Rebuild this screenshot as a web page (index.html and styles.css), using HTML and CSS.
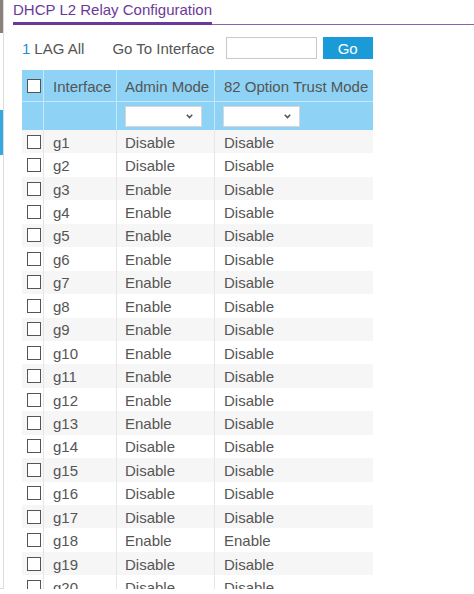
FILE: index.html
```html
<!DOCTYPE html>
<html>
<head>
<meta charset="utf-8">
<link rel="stylesheet" href="styles.css">
</head>
<body>
<div class="frame">
  <div class="side">
    <div class="side-top"></div>
    <div class="side-active"></div>
  </div>
  <div class="content">
    <div class="page-head"><span class="page-title">DHCP L2 Relay Configuration</span></div>
    <div class="toolbar">
      <span class="count">1</span>
      <span class="lag">LAG All</span>
      <span class="goto">Go To Interface</span>
      <input class="goto-input" type="text">
      <button class="go-btn">Go</button>
    </div>
    <div class="grid">
      <div class="row head">
        <div class="cell cb"><span class="box"></span></div>
        <div class="cell">Interface</div>
        <div class="cell">Admin Mode</div>
        <div class="cell">82 Option Trust Mode</div>
      </div>
      <div class="row filter">
        <div class="cell cb"></div>
        <div class="cell"></div>
        <div class="cell"><div class="sel"><svg width="7" height="5" viewBox="0 0 7 5"><polyline points="0.8,0.8 3.5,3.6 6.2,0.8" fill="none" stroke="#555" stroke-width="1.6"/></svg></div></div>
        <div class="cell"><div class="sel"><svg width="7" height="5" viewBox="0 0 7 5"><polyline points="0.8,0.8 3.5,3.6 6.2,0.8" fill="none" stroke="#555" stroke-width="1.6"/></svg></div></div>
      </div>
      <div class="row data"><div class="cell cb"><span class="box"></span></div><div class="cell">g1</div><div class="cell">Disable</div><div class="cell">Disable</div></div>
      <div class="row data"><div class="cell cb"><span class="box"></span></div><div class="cell">g2</div><div class="cell">Disable</div><div class="cell">Disable</div></div>
      <div class="row data"><div class="cell cb"><span class="box"></span></div><div class="cell">g3</div><div class="cell">Enable</div><div class="cell">Disable</div></div>
      <div class="row data"><div class="cell cb"><span class="box"></span></div><div class="cell">g4</div><div class="cell">Enable</div><div class="cell">Disable</div></div>
      <div class="row data"><div class="cell cb"><span class="box"></span></div><div class="cell">g5</div><div class="cell">Enable</div><div class="cell">Disable</div></div>
      <div class="row data"><div class="cell cb"><span class="box"></span></div><div class="cell">g6</div><div class="cell">Enable</div><div class="cell">Disable</div></div>
      <div class="row data"><div class="cell cb"><span class="box"></span></div><div class="cell">g7</div><div class="cell">Enable</div><div class="cell">Disable</div></div>
      <div class="row data"><div class="cell cb"><span class="box"></span></div><div class="cell">g8</div><div class="cell">Enable</div><div class="cell">Disable</div></div>
      <div class="row data"><div class="cell cb"><span class="box"></span></div><div class="cell">g9</div><div class="cell">Enable</div><div class="cell">Disable</div></div>
      <div class="row data"><div class="cell cb"><span class="box"></span></div><div class="cell">g10</div><div class="cell">Enable</div><div class="cell">Disable</div></div>
      <div class="row data"><div class="cell cb"><span class="box"></span></div><div class="cell">g11</div><div class="cell">Enable</div><div class="cell">Disable</div></div>
      <div class="row data"><div class="cell cb"><span class="box"></span></div><div class="cell">g12</div><div class="cell">Enable</div><div class="cell">Disable</div></div>
      <div class="row data"><div class="cell cb"><span class="box"></span></div><div class="cell">g13</div><div class="cell">Enable</div><div class="cell">Disable</div></div>
      <div class="row data"><div class="cell cb"><span class="box"></span></div><div class="cell">g14</div><div class="cell">Disable</div><div class="cell">Disable</div></div>
      <div class="row data"><div class="cell cb"><span class="box"></span></div><div class="cell">g15</div><div class="cell">Disable</div><div class="cell">Disable</div></div>
      <div class="row data"><div class="cell cb"><span class="box"></span></div><div class="cell">g16</div><div class="cell">Disable</div><div class="cell">Disable</div></div>
      <div class="row data"><div class="cell cb"><span class="box"></span></div><div class="cell">g17</div><div class="cell">Disable</div><div class="cell">Disable</div></div>
      <div class="row data"><div class="cell cb"><span class="box"></span></div><div class="cell">g18</div><div class="cell">Enable</div><div class="cell">Enable</div></div>
      <div class="row data"><div class="cell cb"><span class="box"></span></div><div class="cell">g19</div><div class="cell">Disable</div><div class="cell">Disable</div></div>
      <div class="row data"><div class="cell cb"><span class="box"></span></div><div class="cell">g20</div><div class="cell">Disable</div><div class="cell">Disable</div></div>
    </div>
  </div>
</div>
</body>
</html>
```
FILE: styles.css
```css
* { box-sizing: border-box; }
html, body { margin: 0; padding: 0; background: #fff; }
body {
  font-family: "Liberation Sans", Arial, sans-serif;
  font-size: 15px;
  color: #555;
}
.frame {
  display: flex;
  height: 589px;
  overflow: hidden;
}
.side {
  width: 4px;
  flex: none;
  border-right: 1px solid #dcdcdc;
  border-bottom: 1px solid #dcdcdc;
  display: flex;
  flex-direction: column;
}
.side-top { height: 33px; background: #8b817a; }
.side-active { margin-top: 77px; height: 45px; background: #35a9df; }
.content {
  flex: 1;
  padding-left: 9px;
  overflow: hidden;
}
.page-head {
  height: 25px;
  border-bottom: 1px solid #8a62b0;
}
.page-title {
  display: inline-block;
  height: 25px;
  line-height: 20px;
  padding-bottom: 2px;
  border-bottom: 3px solid #6b3a98;
  color: #6b3a98;
  font-size: 15px;
}
.toolbar {
  display: flex;
  align-items: center;
  height: 22px;
  margin-top: 12px;
  padding-left: 9px;
}
.count { color: #1b92cf; margin-right: 4px; }
.lag { margin-right: 28px; }
.goto { margin-right: 11px; }
.goto-input {
  width: 91px;
  height: 22px;
  border: 1px solid #c9c9c9;
  margin: 0 6px 0 0;
  padding: 0;
  background: #fff;
}
.go-btn {
  width: 50px;
  height: 22px;
  border: none;
  margin: 0;
  padding: 0;
  background: #1a9bd7;
  color: #fff;
  font-family: "Liberation Sans", Arial, sans-serif;
  font-size: 15px;
}
.grid {
  margin-top: 11px;
  margin-left: 9px;
  width: 351px;
}
.row {
  display: grid;
  grid-template-columns: 22px 73px 98px 158px;
  height: 23.44px;
}
.cell {
  display: flex;
  align-items: center;
  padding-left: 9px;
  padding-top: 1px;
  white-space: nowrap;
  border-right: 1px solid #e6e6e6;
}
.cell:nth-child(3) { padding-left: 8px; }
.cell:last-child { border-right: none; }
.cell.cb { padding-left: 5px; padding-top: 0; }
.box {
  display: inline-block;
  width: 14px;
  height: 14px;
  border: 1.5px solid #555;
  background: #fff;
}
.row.head {
  height: 32px;
  background: #8ed3f5;
  border-bottom: 1px solid #c4e8fa;
}
.row.head .cell, .row.filter .cell { border-right-color: #c4e8fa; }
.row.filter {
  height: 28px;
  background: #8ed3f5;
}
.row.filter .cell { padding-top: 0; }
.sel {
  width: 77px;
  height: 21px;
  background: #fff;
  border: 1px solid #d6d6d6;
  display: flex;
  align-items: center;
  justify-content: flex-end;
  padding-right: 8px;
}
.row.filter .cell:nth-child(4) { padding-left: 8px; }
.row.data:nth-child(odd) { background: #f6f6f6; }
.row.data:nth-child(even) { background: #fff; }
```
